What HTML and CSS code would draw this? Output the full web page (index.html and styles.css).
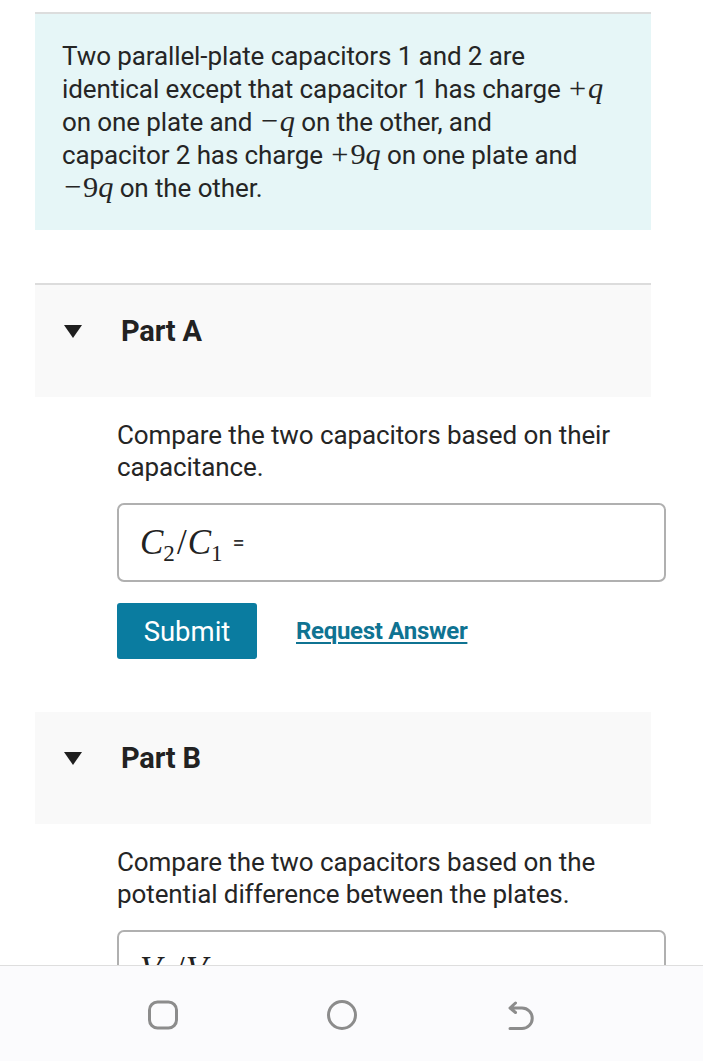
FILE: index.html
```html
<!DOCTYPE html>
<html>
<head>
<meta charset="utf-8">
<link rel="stylesheet" href="styles.css">
</head>
<body>
<div class="page">
  <div class="intro">
    <p class="intro-text">Two parallel-plate capacitors 1 and 2 are identical except that capacitor 1 has charge <span class="m"><span class="op">+</span><i>q</i></span> on one plate and <span class="m"><span class="op">−</span><i>q</i></span> on the other, and<br>capacitor 2 has charge <span class="m"><span class="op">+</span>9<i>q</i></span> on one plate and <span class="m"><span class="op">−</span>9<i>q</i></span> on the other.</p>
  </div>

  <section class="part part-a">
    <div class="part-head">
      <span class="tri"></span>
      <span class="part-title">Part A</span>
    </div>
    <div class="part-body">
      <p class="question">Compare the two capacitors based on their capacitance.</p>
      <div class="answer">
        <span class="m expr"><i>C</i><sub>2</sub><span class="sl">/</span><i>C</i><sub>1</sub></span><span class="eq">=</span>
      </div>
      <div class="actions">
        <button class="submit">Submit</button>
        <a class="request" href="#">Request Answer</a>
      </div>
    </div>
  </section>

  <section class="part part-b">
    <div class="part-head">
      <span class="tri"></span>
      <span class="part-title">Part B</span>
    </div>
    <div class="part-body">
      <p class="question">Compare the two capacitors based on the potential difference between the plates.</p>
      <div class="answer">
        <span class="m expr"><i>V</i><sub>2</sub><span class="sl">/</span><i>V</i><sub>1</sub></span><span class="eq">=</span>
      </div>
    </div>
  </section>
</div>

<nav class="navbar">
  <svg class="nav-icon" width="34" height="34" viewBox="0 0 34 34"><rect x="3.5" y="4" width="27" height="26" rx="8" fill="none" stroke="#8c8c8c" stroke-width="3"/></svg>
  <svg class="nav-icon" width="34" height="34" viewBox="0 0 34 34"><ellipse cx="17" cy="17" rx="13.5" ry="13.5" fill="none" stroke="#8c8c8c" stroke-width="3"/></svg>
  <svg class="nav-icon" width="34" height="34" viewBox="0 0 34 34"><path d="M6 30.5 H18 A10.25 10.25 0 0 0 18 10 H6.5 M11.5 5 L6 10 L11.5 14.5" fill="none" stroke="#8c8c8c" stroke-width="3" stroke-linecap="round" stroke-linejoin="round"/></svg>
</nav>
</body>
</html>
```

FILE: styles.css
```css
html, body {
  margin: 0;
  padding: 0;
  background: #ffffff;
}
body {
  font-family: Roboto, "Liberation Sans", sans-serif;
  color: #252525;
  overflow: hidden;
  height: 1061px;
}
.page {
  padding: 12px 0 0 35px;
  width: 616px;
}
.intro {
  border-top: 2px solid #dcdddd;
  background: #e6f6f7;
  padding: 26px 40px 25px 27px;
}
.intro-text {
  margin: 0;
  font-size: 26px;
  line-height: 33px;
  letter-spacing: -0.1px;
}
.m {
  font-family: "Liberation Serif", "DejaVu Serif", serif;
  font-size: 1.17em;
  line-height: 1;
  white-space: nowrap;
}
.m .op {
  padding: 0 2px;
}
.m i {
  font-style: italic;
}
.part-a {
  margin-top: 53px;
  border-top: 2px solid #dcdcdc;
}
.part-b {
  margin-top: 53px;
}
.part-head {
  height: 112px;
  box-sizing: border-box;
  padding-top: 28px;
  background: #f9f9f9;
  display: flex;
  align-items: flex-start;
}
.tri {
  width: 0;
  height: 0;
  border-left: 9px solid transparent;
  border-right: 9px solid transparent;
  border-top: 13px solid #1f1f1f;
  margin-left: 29px;
  margin-right: 39px;
  margin-top: 12px;
}
.part-title {
  font-size: 29px;
  line-height: 36px;
  font-weight: 700;
  color: #222;
  letter-spacing: -0.2px;
}
.part-body {
  padding: 22px 0 0 82px;
}
.question {
  margin: 0;
  font-size: 26px;
  line-height: 32px;
  letter-spacing: -0.1px;
  width: 520px;
}
.answer {
  margin-top: 20px;
  width: 524px;
  height: 75px;
  border: 2px solid #b0b0b0;
  border-radius: 7px;
  display: flex;
  align-items: center;
  padding-left: 21px;
  background: #fff;
  box-sizing: content-box;
}
.expr {
  font-size: 35px;
  color: #222;
}
.expr sub {
  font-size: 0.66em;
  font-style: normal;
  vertical-align: -0.32em;
  line-height: 0;
}
.expr .sl {
  padding: 0 1px 0 2px;
}
.eq {
  font-size: 22px;
  margin-left: 10px;
  color: #333;
}
.actions {
  margin-top: 21px;
  display: flex;
  align-items: center;
  gap: 39px;
}
.submit {
  width: 140px;
  height: 56px;
  border: none;
  border-radius: 3px;
  background: #0a7ca0;
  color: #ffffff;
  font-family: Roboto, "Liberation Sans", sans-serif;
  font-size: 27.5px;
  padding: 0;
}
.request {
  font-size: 24px;
  font-weight: 700;
  color: #0f7392;
  text-decoration: underline;
  text-underline-offset: 3px;
  text-decoration-thickness: 2px;
  letter-spacing: -0.3px;
}
.navbar {
  position: fixed;
  left: 0;
  right: 0;
  bottom: 0;
  height: 95px;
  background: #fbfbfd;
  border-top: 1px solid #dedede;
}
.nav-icon {
  position: absolute;
  top: 32px;
}
.nav-icon:nth-child(1) { left: 146px; }
.nav-icon:nth-child(2) { left: 325px; }
.nav-icon:nth-child(3) { left: 504px; }
```
